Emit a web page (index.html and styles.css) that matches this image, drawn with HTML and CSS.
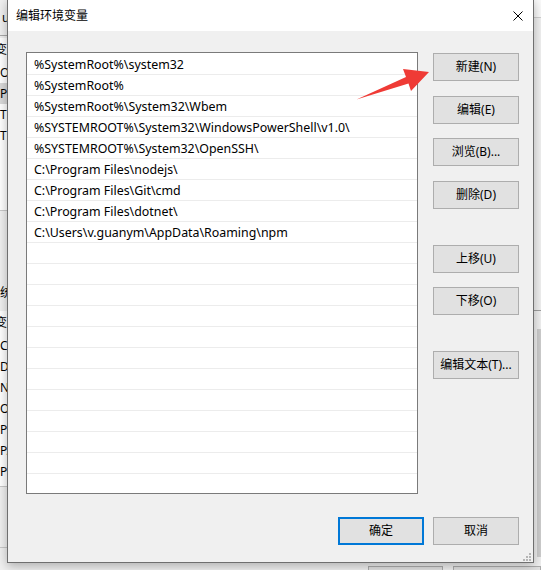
FILE: index.html
```html
<!DOCTYPE html>
<html lang="zh-CN">
<head>
<meta charset="utf-8">
<title>编辑环境变量</title>
<link rel="stylesheet" href="styles.css">
</head>
<body>
<div class="desk">
  <div class="bgwin">
    <div class="bg-main">
      <div class="bg-left">
        <div class="bg-title">u</div>
        <div class="bg-list bg-list1">
          <div class="bg-hdr">变量</div>
          <div class="bg-row">OneDrive</div>
          <div class="bg-row sel">Path</div>
          <div class="bg-row">TEMP</div>
          <div class="bg-row">TMP</div>
        </div>
        <div class="bg-group">系统变量</div>
        <div class="bg-list bg-list2">
          <div class="bg-hdr">变量</div>
          <div class="bg-row">ComSpec</div>
          <div class="bg-row">DriverData</div>
          <div class="bg-row">NUMBER</div>
          <div class="bg-row">OS</div>
          <div class="bg-row">Path</div>
          <div class="bg-row">PATHEXT</div>
          <div class="bg-row">PROCESSOR</div>
        </div>
        <div class="bg-sep"></div>
      </div>
      <div class="bg-fill"></div>
      <div class="bg-right">
        <div class="bg-r-top"></div>
        <div class="bg-r-lines"></div>
        <div class="bg-thumb"></div>
      </div>
    </div>
    <div class="bg-foot">
      <div class="bg-btn"></div>
      <div class="bg-btn wide"></div>
    </div>
  </div>

  <div class="dialog">
    <div class="titlebar">
      <span class="title">编辑环境变量</span>
      <svg class="close" width="10" height="10" viewBox="0 0 10 10"><path d="M0.5 0.5 L9.5 9.5 M9.5 0.5 L0.5 9.5" stroke="#000" stroke-width="1" fill="none"/></svg>
    </div>
    <div class="content">
      <div class="list">
        <div class="row">%SystemRoot%\system32</div>
        <div class="row">%SystemRoot%</div>
        <div class="row">%SystemRoot%\System32\Wbem</div>
        <div class="row">%SYSTEMROOT%\System32\WindowsPowerShell\v1.0\</div>
        <div class="row">%SYSTEMROOT%\System32\OpenSSH\</div>
        <div class="row">C:\Program Files\nodejs\</div>
        <div class="row">C:\Program Files\Git\cmd</div>
        <div class="row">C:\Program Files\dotnet\</div>
        <div class="row">C:\Users\v.guanym\AppData\Roaming\npm</div>
        <div class="row"></div>
        <div class="row"></div>
        <div class="row"></div>
        <div class="row"></div>
        <div class="row"></div>
        <div class="row"></div>
        <div class="row"></div>
        <div class="row"></div>
        <div class="row"></div>
        <div class="row"></div>
        <div class="row"></div>
        <div class="row"></div>
      </div>
      <div class="side">
        <div class="btn first">新建(N)</div>
        <div class="btn m1">编辑(E)</div>
        <div class="btn">浏览(B)...</div>
        <div class="btn m1">删除(D)</div>
        <div class="btn mbig">上移(U)</div>
        <div class="btn">下移(O)</div>
        <div class="btn mbig">编辑文本(T)...</div>
      </div>
    </div>
    <div class="foot">
      <div class="btn default">确定</div>
      <div class="btn">取消</div>
    </div>
    <svg class="grip" width="9" height="9" viewBox="0 0 9 9">
      <rect x="7" y="1" width="2" height="2"/>
      <rect x="4" y="4" width="2" height="2"/>
      <rect x="7" y="4" width="2" height="2"/>
      <rect x="1" y="7" width="2" height="2"/>
      <rect x="4" y="7" width="2" height="2"/>
      <rect x="7" y="7" width="2" height="2"/>
    </svg>
  </div>

  <svg class="arrow" width="541" height="570" viewBox="0 0 541 570">
    <polygon points="356.5,99.5 406,77 403,69 429,72 411,91 408.5,83.5" fill="#ef3b36"/>
  </svg>
</div>
</body>
</html>
```

FILE: styles.css
```css
html, body {
  margin: 0;
  padding: 0;
}
body {
  width: 541px;
  height: 570px;
  overflow: hidden;
  font-family: "Noto Sans", "Noto Sans CJK SC", sans-serif;
  font-size: 12px;
  color: #000;
}
.desk {
  position: relative;
  width: 541px;
  height: 570px;
  background: #f0f0f0;
  overflow: hidden;
}

/* background window */
.bgwin {
  display: flex;
  flex-direction: column;
  width: 541px;
  height: 570px;
}
.bg-main {
  display: flex;
  height: 566px;
}
.bg-left {
  width: 8px;
  flex: none;
  overflow: hidden;
  display: flex;
  flex-direction: column;
  background: #f0f0f0;
}
.bg-fill {
  flex: 1;
  background: #f0f0f0;
}
.bg-title {
  height: 35px;
  line-height: 35px;
  padding-left: 2px;
  border-bottom: 1px solid #a9a9a9;
  background: #f0f0f0;
  flex: none;
}
.bg-list {
  background: #fff;
  border-bottom: 1px solid #c8c8c8;
  overflow: hidden;
  box-sizing: border-box;
  flex: none;
}
.bg-list1 {
  margin-top: 2px;
  height: 173px;
}
.bg-list2 {
  margin-top: 6px;
  height: 176px;
}
.bg-hdr {
  height: 24px;
  line-height: 24px;
  margin-left: -5px;
  white-space: nowrap;
}
.bg-row {
  height: 21px;
  line-height: 21px;
  white-space: nowrap;
}
.bg-row.sel {
  background: #d9d9d9;
}
.bg-group {
  margin-top: 70px;
  height: 24px;
  line-height: 24px;
  margin-left: -12px;
  white-space: nowrap;
  flex: none;
}
.bg-sep {
  margin-top: 60px;
  border-top: 1px solid #c8c8c8;
}
.bg-right {
  width: 8px;
  display: flex;
  flex-direction: column;
  background: #f0f0f0;
}
.bg-r-top {
  height: 17px;
  border-bottom: 1px solid #cfcfcf;
  background: #fafafa;
}
.bg-r-lines {
  height: 292px;
  border-bottom: 1px solid #a0a0a0;
}
.bg-thumb {
  margin-top: 18px;
  margin-left: 4px;
  height: 228px;
  background: #cdcdcd;
}
.bg-foot {
  display: flex;
  gap: 10px;
  padding-left: 368px;
  height: 4px;
}
.bg-btn {
  width: 84px;
  border: 1px solid #adadad;
  border-bottom: none;
  background: #e1e1e1;
}
.bg-btn.wide {
  width: 100px;
}

/* dialog */
.dialog {
  position: absolute;
  left: 7px;
  top: -1px;
  width: 527px;
  height: 564px;
  box-sizing: border-box;
  border: 1px solid #6f6f6f;
  background: #f0f0f0;
  box-shadow: 0 3px 10px rgba(0, 0, 0, 0.28);
  display: flex;
  flex-direction: column;
}
.titlebar {
  height: 31px;
  flex: none;
  background: #fff;
  display: flex;
  align-items: center;
  padding: 0 10px 0 8px;
}
.title {
  line-height: 16px;
  margin-top: 1px;
}
.close {
  margin-left: auto;
  display: block;
}
.content {
  display: flex;
  gap: 15px;
  padding: 21px 14px 0 18px;
}
.list {
  width: 392px;
  height: 442px;
  flex: none;
  box-sizing: border-box;
  border: 1px solid #7a7a7a;
  background: #fff;
  padding-top: 1px;
  overflow: hidden;
}
.row {
  height: 21px;
  box-sizing: border-box;
  border-bottom: 1px solid #ececec;
  padding: 1px 0 0 7px;
  font-size: 12.4px;
  line-height: 19px;
  white-space: nowrap;
}
.side {
  width: 86px;
  display: flex;
  flex-direction: column;
  gap: 14px;
}
.btn {
  width: 86px;
  height: 28px;
  box-sizing: border-box;
  border: 1px solid #adadad;
  background: #e1e1e1;
  display: flex;
  align-items: center;
  justify-content: center;
  white-space: nowrap;
  line-height: 16px;
}
.btn.first {
  margin-top: 1px;
}
.btn.m1 {
  margin-top: 1px;
}
.btn.mbig {
  margin-top: 22px;
}
.foot {
  display: flex;
  justify-content: flex-end;
  gap: 9px;
  padding: 23px 14px 0 0;
}
.btn.default {
  border: 2px solid #0078d7;
}
.grip {
  position: absolute;
  right: 2px;
  bottom: 1px;
  fill: #b5b5b5;
}
.arrow {
  position: absolute;
  left: 0;
  top: 0;
  pointer-events: none;
}
```
